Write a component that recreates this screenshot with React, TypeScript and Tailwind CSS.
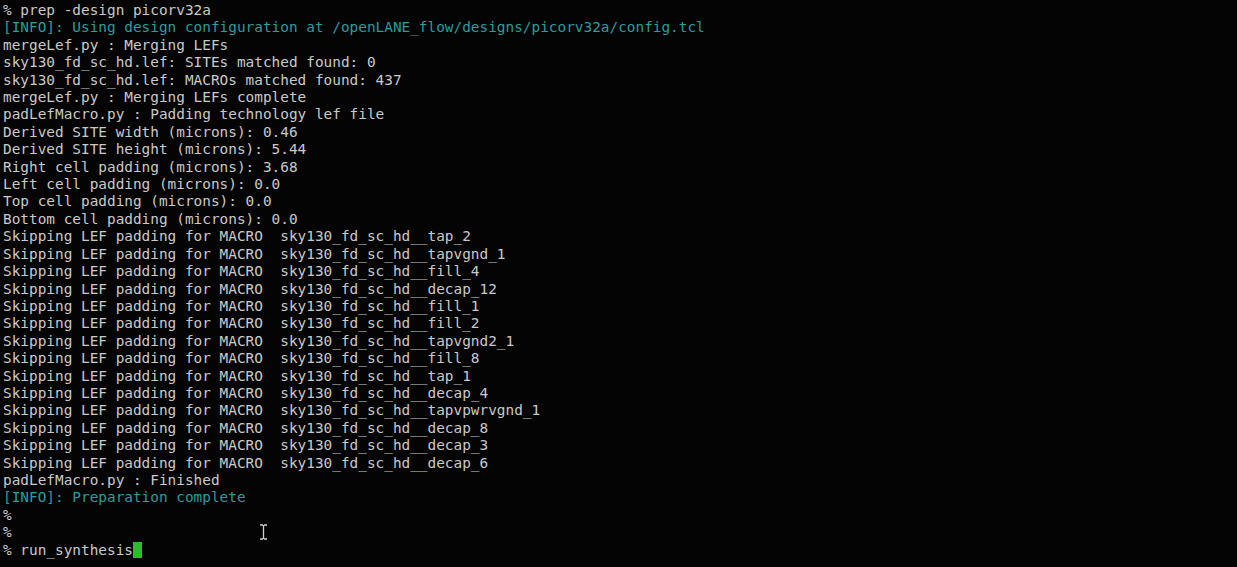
const lines: { text: string; info?: boolean }[] = [
  { text: "% prep -design picorv32a" },
  { text: "[INFO]: Using design configuration at /openLANE_flow/designs/picorv32a/config.tcl", info: true },
  { text: "mergeLef.py : Merging LEFs" },
  { text: "sky130_fd_sc_hd.lef: SITEs matched found: 0" },
  { text: "sky130_fd_sc_hd.lef: MACROs matched found: 437" },
  { text: "mergeLef.py : Merging LEFs complete" },
  { text: "padLefMacro.py : Padding technology lef file" },
  { text: "Derived SITE width (microns): 0.46" },
  { text: "Derived SITE height (microns): 5.44" },
  { text: "Right cell padding (microns): 3.68" },
  { text: "Left cell padding (microns): 0.0" },
  { text: "Top cell padding (microns): 0.0" },
  { text: "Bottom cell padding (microns): 0.0" },
  { text: "Skipping LEF padding for MACRO  sky130_fd_sc_hd__tap_2" },
  { text: "Skipping LEF padding for MACRO  sky130_fd_sc_hd__tapvgnd_1" },
  { text: "Skipping LEF padding for MACRO  sky130_fd_sc_hd__fill_4" },
  { text: "Skipping LEF padding for MACRO  sky130_fd_sc_hd__decap_12" },
  { text: "Skipping LEF padding for MACRO  sky130_fd_sc_hd__fill_1" },
  { text: "Skipping LEF padding for MACRO  sky130_fd_sc_hd__fill_2" },
  { text: "Skipping LEF padding for MACRO  sky130_fd_sc_hd__tapvgnd2_1" },
  { text: "Skipping LEF padding for MACRO  sky130_fd_sc_hd__fill_8" },
  { text: "Skipping LEF padding for MACRO  sky130_fd_sc_hd__tap_1" },
  { text: "Skipping LEF padding for MACRO  sky130_fd_sc_hd__decap_4" },
  { text: "Skipping LEF padding for MACRO  sky130_fd_sc_hd__tapvpwrvgnd_1" },
  { text: "Skipping LEF padding for MACRO  sky130_fd_sc_hd__decap_8" },
  { text: "Skipping LEF padding for MACRO  sky130_fd_sc_hd__decap_3" },
  { text: "Skipping LEF padding for MACRO  sky130_fd_sc_hd__decap_6" },
  { text: "padLefMacro.py : Finished" },
  { text: "[INFO]: Preparation complete", info: true },
  { text: "%" },
  { text: "%" },
];

export default function App() {
  return (
    <div className="relative h-[567px] w-[1237px] overflow-hidden bg-[#040404] pl-[3px] pt-[2px] font-['DejaVu_Sans_Mono',monospace] text-[14.4px] leading-[17.4px] text-[#c9c9c9]">
      {lines.map((line, i) => (
        <div key={i} className={"whitespace-pre " + (line.info ? "text-[#2a9d9d]" : "")}>
          {line.text}
        </div>
      ))}
      <div className="flex items-center whitespace-pre">
        <span>% run_synthesis</span>
        <span className="inline-block h-[16px] w-[9px] bg-[#25c02a]" />
      </div>

      {/* mouse I-beam */}
      <svg className="absolute left-[259px] top-[524px]" width="9" height="16" viewBox="0 0 9 16">
        <path d="M1 1h3M5 1h3M4.5 1v14M1 15h3M5 15h3" stroke="#d0d0d0" strokeWidth="1.3" fill="none" />
      </svg>
    </div>
  );
}
